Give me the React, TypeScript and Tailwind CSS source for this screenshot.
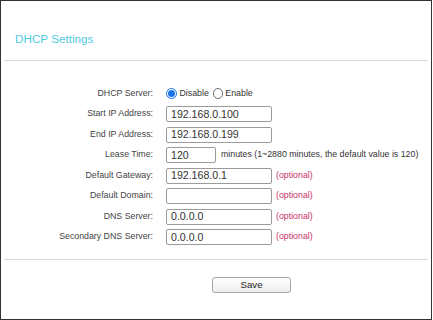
import React from "react";

const font = "font-['Liberation_Sans',Arial,sans-serif]";

function Radio({ checked }: { checked?: boolean }) {
  return checked ? (
    <span className="inline-flex w-[10.5px] h-[10.5px] rounded-full border border-[#1a73e8] bg-white items-center justify-center shrink-0">
      <span className="w-[6.5px] h-[6.5px] rounded-full bg-[#1a73e8]" />
    </span>
  ) : (
    <span className="inline-block w-[10.5px] h-[10.5px] rounded-full border border-[#707070] bg-white shrink-0" />
  );
}

function Field({ value, w = "w-[106px]" }: { value: string; w?: string }) {
  return (
    <div
      className={`${w} h-[16px] border border-[#9b9b9b] rounded-[2px] bg-white px-[4px] flex items-center text-[10.6px] text-[#333] leading-none`}
    >
      {value}
    </div>
  );
}

function Optional() {
  return <span className="ml-[4px] text-[8.8px] text-[#c8336a]">(optional)</span>;
}

const rows: { label: string; content: React.ReactNode }[] = [
  {
    label: "DHCP Server:",
    content: (
      <div className="flex items-center text-[8.8px] text-[#333]">
        <Radio checked />
        <span className="ml-[3px]">Disable</span>
        <span className="ml-[4px] flex">
          <Radio />
        </span>
        <span className="ml-[2px]">Enable</span>
      </div>
    ),
  },
  { label: "Start IP Address:", content: <Field value="192.168.0.100" /> },
  { label: "End IP Address:", content: <Field value="192.168.0.199" /> },
  {
    label: "Lease Time:",
    content: (
      <>
        <Field value="120" w="w-[50px]" />
        <span className="ml-[5px] text-[8.8px] text-[#333] whitespace-nowrap">
          minutes (1~2880 minutes, the default value is 120)
        </span>
      </>
    ),
  },
  {
    label: "Default Gateway:",
    content: (
      <>
        <Field value="192.168.0.1" />
        <Optional />
      </>
    ),
  },
  {
    label: "Default Domain:",
    content: (
      <>
        <Field value="" />
        <Optional />
      </>
    ),
  },
  {
    label: "DNS Server:",
    content: (
      <>
        <Field value="0.0.0.0" />
        <Optional />
      </>
    ),
  },
  {
    label: "Secondary DNS Server:",
    content: (
      <>
        <Field value="0.0.0.0" />
        <Optional />
      </>
    ),
  },
];

export default function App() {
  return (
    <div className={`w-[432px] h-[320px] border border-[#333] bg-white ${font}`}>
      <div className="h-[59px] pt-[30.6px] pl-[14px] leading-[14px] text-[11.7px] text-[#4fcbdf]">
        DHCP Settings
      </div>
      <div className="h-px bg-[#d6d6d6] mx-[3px]" />

      <div className="mt-[22.25px] grid grid-cols-[152px_1fr] gap-x-[13px] auto-rows-[20.5px]">
        {rows.map((r) => (
          <React.Fragment key={r.label}>
            <div className="flex items-center justify-end text-[8.8px] text-[#444] whitespace-nowrap">
              {r.label}
            </div>
            <div className="flex items-center">{r.content}</div>
          </React.Fragment>
        ))}
      </div>

      <div className="mt-[11.75px] h-px bg-[#d6d6d6] mx-[3px]" />

      <div className="mt-[17px] pl-[211px]">
        <button className="w-[79px] h-[16px] rounded-[3px] border border-[#a8a8a8] bg-gradient-to-b from-white to-[#ededed] text-[9.7px] text-[#222] leading-none flex items-center justify-center">
          Save
        </button>
      </div>
    </div>
  );
}
